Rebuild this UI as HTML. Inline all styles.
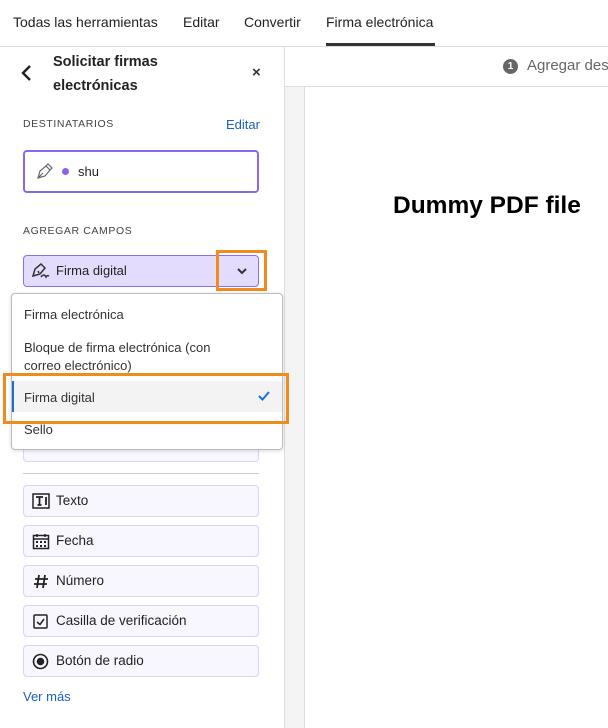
<!DOCTYPE html>
<html><head><meta charset="utf-8"><style>
*{box-sizing:border-box;margin:0;padding:0}
body{width:608px;height:728px;overflow:hidden;background:#fff;font-family:"Liberation Sans",sans-serif;position:relative;color:#222}
.a{position:absolute}
.nav{font-size:14px;color:#222;top:14px}
.field{position:absolute;left:23px;width:236px;height:32px;background:#f8f6ff;border:1px solid #dcd2fb;border-radius:4px;font-size:13.5px;color:#222;padding-left:32px;line-height:30px}
.field svg{position:absolute;left:8px;top:7px}
.lbl{font-size:10.5px;letter-spacing:.6px;color:#444}
.mi{position:absolute;left:24px;font-size:13px;color:#333}
</style></head><body>
<div class="a nav" style="left:13px">Todas las herramientas</div>
<div class="a nav" style="left:183px">Editar</div>
<div class="a nav" style="left:244px">Convertir</div>
<div class="a nav" style="left:326px">Firma electrónica</div>
<div class="a" style="left:326px;top:43px;width:109px;height:3px;background:#333"></div>
<div class="a" style="left:0;top:46px;width:608px;height:1px;background:#ddd"></div>
<div class="a" style="left:284px;top:47px;width:1px;height:681px;background:#ddd"></div>
<div class="a" style="left:285px;top:86px;width:323px;height:1px;background:#ddd"></div>
<div class="a" style="left:285px;top:87px;width:20px;height:641px;background:#f4f4f4;border-right:1px solid #ddd"></div>
<div class="a" style="left:503px;top:59px;width:15px;height:15px;border-radius:50%;background:#666;color:#fff;font-size:10px;font-weight:bold;text-align:center;line-height:15px">1</div>
<div class="a" style="left:527px;top:57px;width:81px;height:22px;overflow:hidden;font-size:15px;color:#666;white-space:nowrap">Agregar destinatarios</div>
<div class="a" style="left:393px;top:192px;font-size:24.5px;font-weight:bold;color:#000;white-space:nowrap">Dummy PDF file</div>

<svg class="a" style="left:20px;top:64px" width="14" height="18"><path d="M10 2 L3 9 L10 16" stroke="#222" stroke-width="2.4" fill="none"/></svg>
<div class="a" style="left:53px;top:50px;font-size:14.5px;font-weight:bold;line-height:24px;color:#222">Solicitar firmas<br>electrónicas</div>
<div class="a" style="left:252px;top:64px;font-size:15px;font-weight:bold;color:#333">×</div>
<div class="a lbl" style="left:23px;top:118px">DESTINATARIOS</div>
<div class="a" style="left:226px;top:117px;font-size:13px;color:#1a5fc4">Editar</div>
<div class="a" style="left:23px;top:150px;width:236px;height:43px;border:2px solid #8a68ea;border-radius:4px"></div>
<svg class="a" style="left:36px;top:163px" width="17" height="17"><path d="M2 15 L4 8 L10 3 L14 7 L9 13 Z M2 15 L7 10 M10 3 L12 1 L16 5 L14 7" stroke="#666" stroke-width="1.2" fill="none"/></svg>
<div class="a" style="left:62px;top:168px;width:7px;height:7px;border-radius:50%;background:#8c5ff0"></div>
<div class="a" style="left:78px;top:164px;font-size:13px;color:#222">shu</div>
<div class="a lbl" style="left:23px;top:225px">AGREGAR CAMPOS</div>
<div class="a" style="left:23px;top:255px;width:236px;height:32px;background:#e4dcfc;border:1px solid #8d6ef0;border-radius:4px"></div>
<svg class="a" style="left:31px;top:262px" width="19" height="18"><path d="M2 14 L4 7 L10 2 L14 6 L9 12 Z M7 9 L8 11 M10 15 Q13 11 15 15 Q16 13 18 14" stroke="#333" stroke-width="1.5" fill="none"/></svg>
<div class="a" style="left:56px;top:263px;font-size:13px;color:#222">Firma digital</div>
<svg class="a" style="left:236px;top:267px" width="12" height="8"><path d="M2 2 L6 6 L10 2" stroke="#333" stroke-width="2" fill="none"/></svg>
<div class="a" style="left:216px;top:250px;width:51px;height:41px;border:3px solid #f08c1e"></div>

<div class="field" style="top:430px;height:32px"></div>
<div class="a" style="left:23px;top:473px;width:236px;height:1px;background:#ccc"></div>
<div class="a" style="left:11px;top:293px;width:272px;height:157px;background:#fff;border:1px solid #bbb;border-radius:4px;box-shadow:0 1px 4px rgba(0,0,0,.15)"></div>
<div class="mi" style="top:307px">Firma electrónica</div>
<div class="mi" style="top:339px;line-height:18px">Bloque de firma electrónica (con<br>correo electrónico)</div>
<div class="a" style="left:12px;top:381px;width:270px;height:31px;background:#f3f3f3;border-left:2px solid #1a6fe0"></div>
<div class="mi" style="top:390px">Firma digital</div>
<svg class="a" style="left:257px;top:390px" width="14" height="12"><path d="M2 6 L5.5 9.5 L12 2" stroke="#1a6fe0" stroke-width="2" fill="none"/></svg>
<div class="mi" style="top:422px">Sello</div>
<div class="a" style="left:3px;top:373px;width:286px;height:51px;border:3px solid #f08c1e"></div>

<div class="field" style="top:485px"><svg width="18" height="16"><rect x="1" y="1" width="16" height="14" fill="none" stroke="#222" stroke-width="1.5"/><path d="M4 4 H11 M7.5 4 V12 M5.5 12 H9.5 M14 4 V12" stroke="#222" stroke-width="1.8"/></svg>Texto</div>
<div class="field" style="top:525px"><svg width="18" height="17"><rect x="1.5" y="2.5" width="15" height="13" fill="none" stroke="#222" stroke-width="1.5"/><path d="M1.5 6 H16.5 M5 1 V4 M13 1 V4" stroke="#222" stroke-width="1.5"/><path d="M4 8h2v2H4zM8 8h2v2H8zM12 8h2v2h-2zM4 12h2v2H4zM8 12h2v2H8zM12 12h2v2h-2z" fill="#222"/></svg>Fecha</div>
<div class="field" style="top:565px"><svg width="18" height="17"><path d="M7 2 L5 15 M13 2 L11 15 M3 6 H16 M2 11 H15" stroke="#222" stroke-width="1.8"/></svg>Número</div>
<div class="field" style="top:605px"><svg width="18" height="17"><rect x="2" y="2" width="13" height="13" rx="1" fill="none" stroke="#222" stroke-width="1.5"/><path d="M5 9 L8 11.5 L12 6" stroke="#222" stroke-width="1.5" fill="none"/></svg>Casilla de verificación</div>
<div class="field" style="top:645px"><svg width="18" height="17"><circle cx="8.5" cy="8.5" r="7" fill="none" stroke="#222" stroke-width="1.6"/><circle cx="8.5" cy="8.5" r="3.8" fill="#222"/></svg>Botón de radio</div>
<div class="a" style="left:23px;top:689px;font-size:13px;color:#1a5fc4">Ver más</div>
</body></html>
